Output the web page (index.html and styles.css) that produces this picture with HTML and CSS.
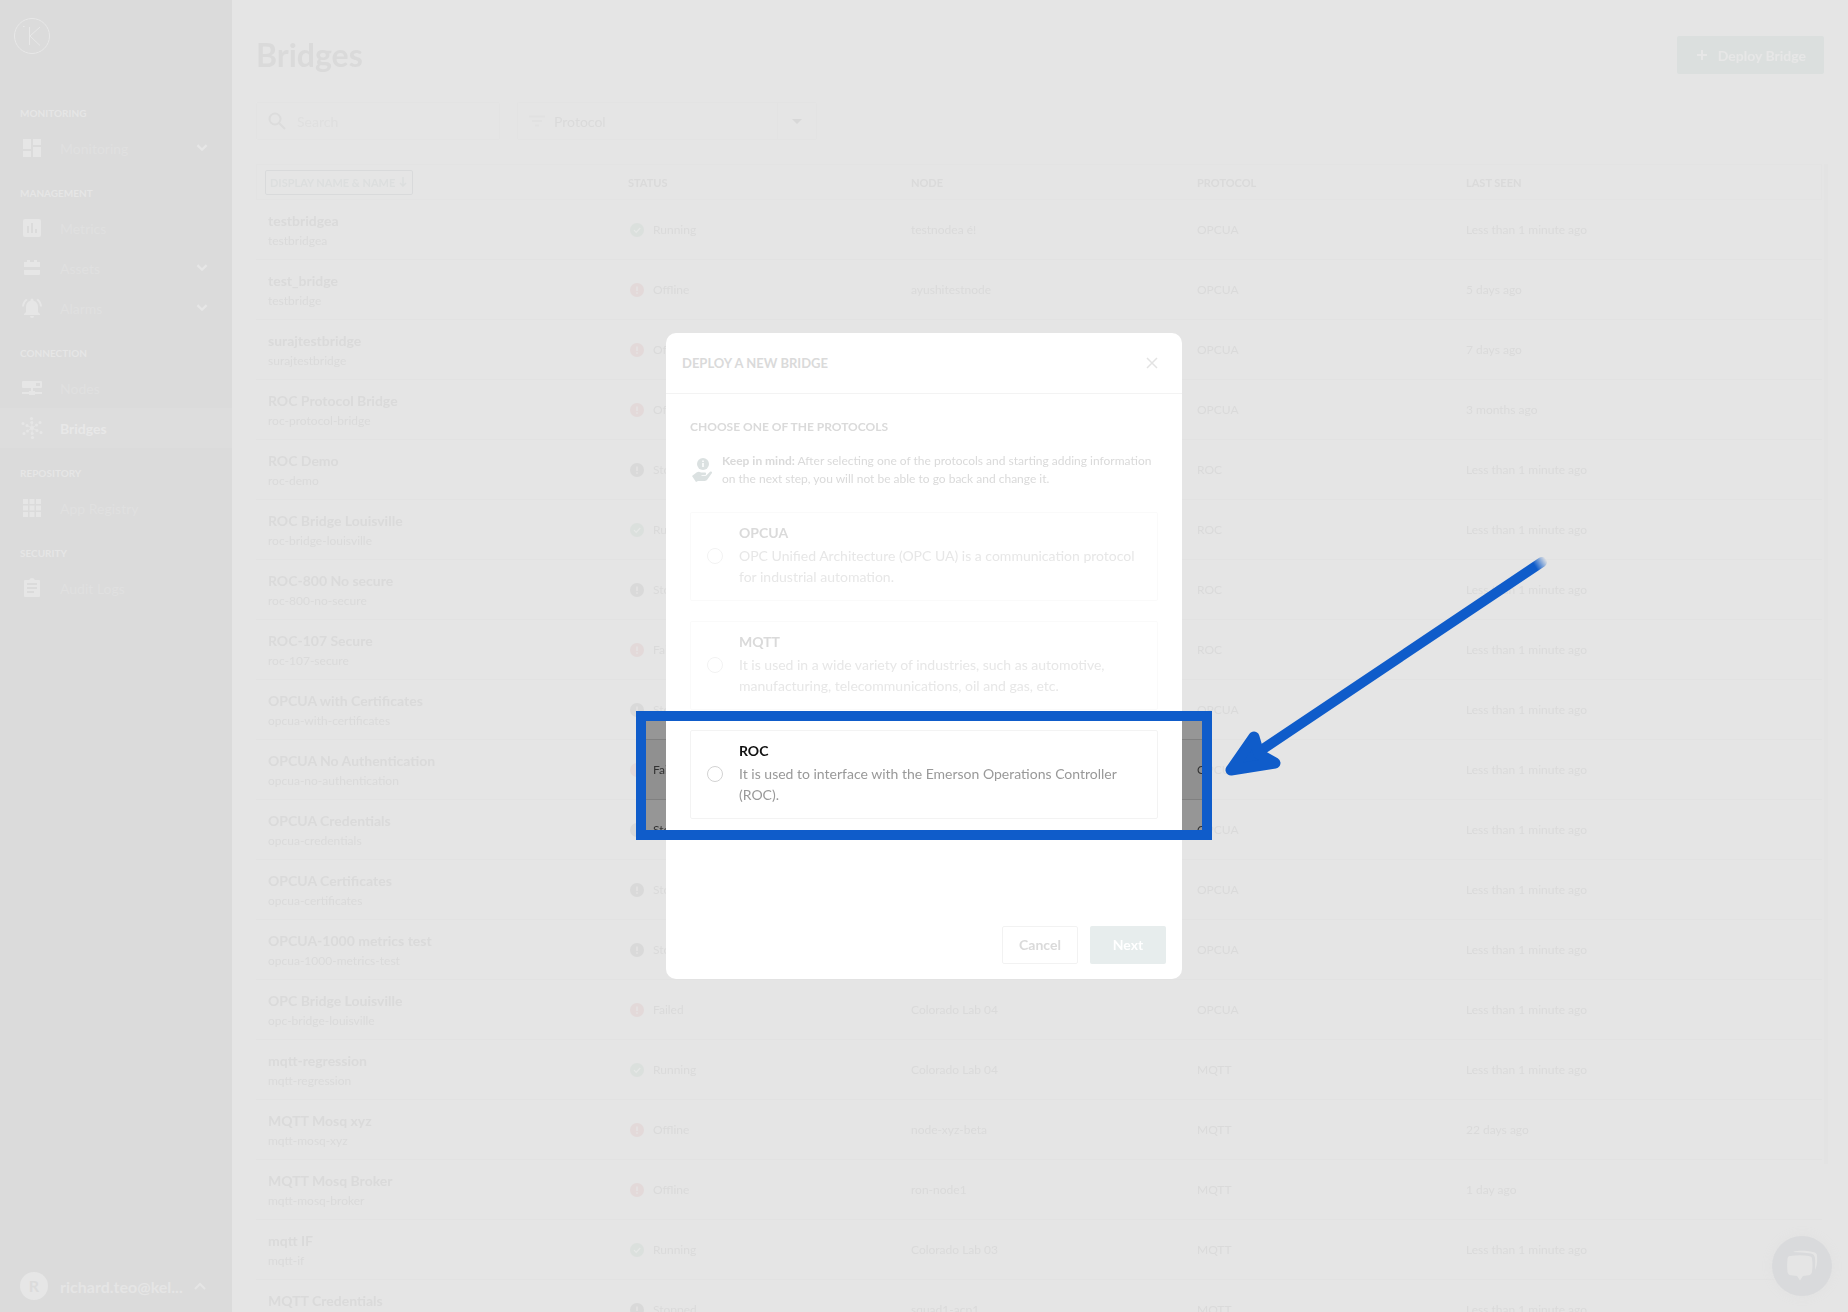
FILE: index.html
```html
<!DOCTYPE html>
<html lang="en">
<head>
    <meta charset="UTF-8">
    <meta name="viewport" content="width=device-width, initial-scale=1.0">
    <title>Bridges</title>
    <link rel="stylesheet" href="styles.css">
</head>
<body>
    <!-- shared icons -->
    <svg class="defs" width="0" height="0">
        <symbol id="ok" viewBox="0 0 14 14"><circle cx="7" cy="7" r="7" fill="currentColor"/><path d="M4 7.2l2.2 2.2L10.2 5" fill="none" stroke="#e6e8e7" stroke-width="1.2"/></symbol>
        <symbol id="warn" viewBox="0 0 14 14"><circle cx="7" cy="7" r="7" fill="currentColor"/><path d="M7 3.5v4.4M7 9.2v1.5" stroke="#e6e4e4" stroke-width="1.4"/></symbol>
        <symbol id="down" viewBox="0 0 10 7"><path d="M1 1l4 4 4-4" fill="none" stroke="currentColor" stroke-width="2"/></symbol>
    </svg>

    <div class="app">
        <aside class="sidebar">
            <div class="logo">
                <svg width="38" height="38" viewBox="0 0 38 38" fill="none" stroke="#e8e8e8"><circle cx="19" cy="19" r="17.5"/><path d="M16.500 10v18M27 10L17 19l10 9.500M10 9.500h1.500"/></svg>
            </div>
            <nav>
                <h3>MONITORING</h3>
                <a href="#"><svg viewBox="0 0 24 24"><path d="M3 13h8V3H3v10zm0 8h8v-6H3v6zm10 0h8V11h-8v10zm0-18v6h8V3h-8z"/></svg><span>Monitoring</span><svg class="chev"><use href="#down"/></svg></a>
                <h3>MANAGEMENT</h3>
                <a href="#"><svg viewBox="0 0 24 24"><path d="M19 3H5a2 2 0 0 0-2 2v14a2 2 0 0 0 2 2h14a2 2 0 0 0 2-2V5a2 2 0 0 0-2-2zM9 17H7v-7h2v7zm4 0h-2V7h2v10zm4 0h-2v-4h2v4z"/></svg><span>Metrics</span></a>
                <a href="#"><svg viewBox="0 0 24 24"><path d="M4 11V6h3V4h3v2h4V4h3v2h3v5zM4 14h16v4a1 1 0 0 1-1 1H5a1 1 0 0 1-1-1z"/></svg><span>Assets</span><svg class="chev"><use href="#down"/></svg></a>
                <a href="#"><svg viewBox="0 0 24 24"><path d="M7.600 4.100L6.200 2.700C3.800 4.500 2.200 7.300 2 10.500h2c.2-2.700 1.500-5 3.600-6.400zM20 10.500h2c-.2-3.200-1.700-6-4.100-7.800l-1.500 1.400c2.100 1.400 3.500 3.700 3.600 6.400zM18 11c0-3.100-1.600-5.600-4.500-6.300V4a1.500 1.500 0 0 0-3 0v.7C7.600 5.400 6 7.900 6 11v5l-2 2v1h16v-1l-2-2v-5zM10 20a2 2 0 0 0 4 0z"/></svg><span>Alarms</span><svg class="chev"><use href="#down"/></svg></a>
                <h3>CONNECTION</h3>
                <a href="#"><svg viewBox="0 0 24 24"><path fill-rule="evenodd" d="M3 5h18a1 1 0 0 1 1 1v5a1 1 0 0 1-1 1h-8v3h2v1h7v2h-7v1H9v-1H2v-2h7v-1h2v-3H3a1 1 0 0 1-1-1V6a1 1 0 0 1 1-1zm13 2v3h4V7z"/></svg><span>Nodes</span></a>
                <a href="#" class="active"><svg viewBox="0 0 24 24"><path d="M11.800 6.500l.4 11M7 9.500l10 5M7.500 15l9-6" stroke="currentColor" stroke-width="1"/><g><circle cx="12" cy="12" r="2"/><circle cx="11.500" cy="2.500" r="1.600"/><circle cx="12.500" cy="21.500" r="1.600"/><circle cx="3" cy="7.500" r="1.500"/><circle cx="21" cy="16.500" r="1.500"/><circle cx="4" cy="17.500" r="1.500"/><circle cx="20" cy="6.500" r="1.500"/><circle cx="11.800" cy="6.500" r="1.500"/><circle cx="12.200" cy="17.500" r="1.500"/><circle cx="7" cy="9.500" r="1.500"/><circle cx="17" cy="14.500" r="1.500"/><circle cx="7.500" cy="15" r="1.500"/><circle cx="16.500" cy="9" r="1.500"/></g></svg><span>Bridges</span></a>
                <h3>REPOSITORY</h3>
                <a href="#"><svg viewBox="0 0 24 24"><path d="M3 3h5v5H3zM9.500 3h5v5h-5zM16 3h5v5h-5zM3 9.500h5v5H3zM9.500 9.500h5v5h-5zM16 9.500h5v5h-5zM3 16h5v5H3zM9.500 16h5v5h-5zM16 16h5v5h-5z"/></svg><span>App Registry</span></a>
                <h3>SECURITY</h3>
                <a href="#"><svg viewBox="0 0 24 24"><path d="M19 4h-4.200a3 3 0 0 0-5.600 0H5a1 1 0 0 0-1 1v15a1 1 0 0 0 1 1h14a1 1 0 0 0 1-1V5a1 1 0 0 0-1-1zm-5 13H7v-2h7v2zm3-4H7v-2h10v2zm0-4H7V7h10v2z"/></svg><span>Audit Logs</span></a>
            </nav>
            <button class="user">
                <span class="avatar">R</span>
                <span class="mail">richard.teo@kel...</span>
                <svg width="12" height="8" viewBox="0 0 12 8"><path d="M1 7l5-5 5 5" fill="none" stroke="currentColor" stroke-width="2"/></svg>
            </button>
        </aside>

        <main>
            <header class="top">
                <h1>Bridges</h1>
                <button class="deploy"><svg width="10" height="12" viewBox="0 0 10 12"><path d="M5 1v10M0 6h10" stroke="currentColor" stroke-width="2"/></svg>Deploy Bridge</button>
            </header>

            <div class="filters">
                <label class="search">
                    <svg width="18" height="18" viewBox="0 0 18 18" fill="none" stroke="currentColor" stroke-width="2"><circle cx="7" cy="7" r="5.500"/><path d="M11 11l6 6"/></svg>
                    <input type="text" placeholder="Search" aria-label="Search">
                </label>
                <label class="protocol">
                    <svg width="16" height="12" viewBox="0 0 16 12"><path d="M0 1.500h16M3 6h10M6 10.500h4" stroke="#e1e1e1" stroke-width="2"/></svg>
                    <select aria-label="Protocol"><option>Protocol</option></select>
                    <span class="caret"></span>
                </label>
            </div>

            <div class="list">
            <table>
                <thead>
                    <tr>
                        <th class="c-name"><button class="sort">DISPLAY NAME &amp; NAME <svg width="8" height="10" viewBox="0 0 8 10"><path d="M4 0v9M1 6l3 3 3-3" fill="none" stroke="currentColor" stroke-width="1.500"/></svg></button></th>
                        <th class="c-status">STATUS</th>
                        <th class="c-node">NODE</th>
                        <th class="c-proto">PROTOCOL</th>
                        <th>LAST SEEN</th>
                    </tr>
                </thead>
                <tbody>
                    <tr><td><b>testbridgea</b><small>testbridgea</small></td><td><svg class="st green"><use href="#ok"/></svg>Running</td><td>testnodea é!</td><td>OPCUA</td><td>Less than 1 minute ago</td></tr>
                    <tr><td><b>test_bridge</b><small>testbridge</small></td><td><svg class="st red"><use href="#warn"/></svg>Offline</td><td>ayushitestnode</td><td>OPCUA</td><td>5 days ago</td></tr>
                    <tr><td><b>surajtestbridge</b><small>surajtestbridge</small></td><td><svg class="st red"><use href="#warn"/></svg>Offline</td><td></td><td>OPCUA</td><td>7 days ago</td></tr>
                    <tr><td><b>ROC Protocol Bridge</b><small>roc-protocol-bridge</small></td><td><svg class="st red"><use href="#warn"/></svg>Offline</td><td></td><td>OPCUA</td><td>3 months ago</td></tr>
                    <tr><td><b>ROC Demo</b><small>roc-demo</small></td><td><svg class="st"><use href="#warn"/></svg>Stopped</td><td></td><td>ROC</td><td>Less than 1 minute ago</td></tr>
                    <tr><td><b>ROC Bridge Louisville</b><small>roc-bridge-louisville</small></td><td><svg class="st green"><use href="#ok"/></svg>Running</td><td></td><td>ROC</td><td>Less than 1 minute ago</td></tr>
                    <tr><td><b>ROC-800 No secure</b><small>roc-800-no-secure</small></td><td><svg class="st"><use href="#warn"/></svg>Stopped</td><td></td><td>ROC</td><td>Less than 1 minute ago</td></tr>
                    <tr><td><b>ROC-107 Secure</b><small>roc-107-secure</small></td><td><svg class="st red"><use href="#warn"/></svg>Failed</td><td></td><td>ROC</td><td>Less than 1 minute ago</td></tr>
                    <tr><td><b>OPCUA with Certificates</b><small>opcua-with-certificates</small></td><td><svg class="st"><use href="#warn"/></svg>Stopped</td><td></td><td>OPCUA</td><td>Less than 1 minute ago</td></tr>
                    <tr><td><b>OPCUA No Authentication</b><small>opcua-no-authentication</small></td><td><svg class="st red"><use href="#warn"/></svg><span class="lit">Failed</span></td><td></td><td><span class="lit">O</span>PCUA</td><td>Less than 1 minute ago</td></tr>
                    <tr><td><b>OPCUA Credentials</b><small>opcua-credentials</small></td><td><svg class="st"><use href="#warn"/></svg><span class="lit">Stopped</span></td><td></td><td><span class="lit">O</span>PCUA</td><td>Less than 1 minute ago</td></tr>
                    <tr><td><b>OPCUA Certificates</b><small>opcua-certificates</small></td><td><svg class="st"><use href="#warn"/></svg>Stopped</td><td></td><td>OPCUA</td><td>Less than 1 minute ago</td></tr>
                    <tr><td><b>OPCUA-1000 metrics test</b><small>opcua-1000-metrics-test</small></td><td><svg class="st"><use href="#warn"/></svg>Stopped</td><td></td><td>OPCUA</td><td>Less than 1 minute ago</td></tr>
                    <tr><td><b>OPC Bridge Louisville</b><small>opc-bridge-louisville</small></td><td><svg class="st red"><use href="#warn"/></svg>Failed</td><td>Colorado Lab 04</td><td>OPCUA</td><td>Less than 1 minute ago</td></tr>
                    <tr><td><b>mqtt-regression</b><small>mqtt-regression</small></td><td><svg class="st green"><use href="#ok"/></svg>Running</td><td>Colorado Lab 04</td><td>MQTT</td><td>Less than 1 minute ago</td></tr>
                    <tr><td><b>MQTT Mosq xyz</b><small>mqtt-mosq-xyz</small></td><td><svg class="st red"><use href="#warn"/></svg>Offline</td><td>node-xyz-beta</td><td>MQTT</td><td>22 days ago</td></tr>
                    <tr><td><b>MQTT Mosq Broker</b><small>mqtt-mosq-broker</small></td><td><svg class="st red"><use href="#warn"/></svg>Offline</td><td>ron-node1</td><td>MQTT</td><td>1 day ago</td></tr>
                    <tr><td><b>mqtt IF</b><small>mqtt-if</small></td><td><svg class="st green"><use href="#ok"/></svg>Running</td><td>Colorado Lab 03</td><td>MQTT</td><td>Less than 1 minute ago</td></tr>
                    <tr><td><b>MQTT Credentials</b><small>mqtt-credentials</small></td><td><svg class="st"><use href="#warn"/></svg>Stopped</td><td>squad1-acp1</td><td>MQTT</td><td>Less than 1 minute ago</td></tr>
                </tbody>
            </table>
            <div class="scrollbar"></div>
            </div>
        </main>
    </div>

    <div class="layer under"><div class="stage"><div class="shade"></div></div></div>

    <div class="layer over">
        <div class="stage">
            <form class="modal">
                <header>
                    <h2>DEPLOY A NEW BRIDGE</h2>
                    <button type="button" class="close" aria-label="Close"><svg width="12" height="12" viewBox="0 0 12 12"><path d="M1 1l10 10M11 1L1 11" stroke="currentColor" stroke-width="1.500"/></svg></button>
                </header>
                <div class="body">
                    <h4>CHOOSE ONE OF THE PROTOCOLS</h4>
                    <div class="note">
                        <svg width="20" height="24" viewBox="0 0 20 24" fill="#dbe1e1"><circle cx="11" cy="6" r="6"/><path d="M0 18l4.500-3.500c1.500-1 3-1 4.500 0h4c1.500 0 1.500 2.500 0 2.500H9.500v.8H14l4-4c1.500-1 2.800.4 1.600 1.800L15 22c-1 .9-2 1-3 1H6l-2 1z"/><path d="M11 5v4M11 2.500v1.500" stroke="#fff" stroke-width="1.500"/></svg>
                        <p><b>Keep in mind:</b> After selecting one of the protocols and starting adding information on the next step, you will not be able to go back and change it.</p>
                    </div>
                    <label class="option">
                        <input type="radio" name="protocol">
                        <span><b>OPCUA</b>OPC Unified Architecture (OPC UA) is a communication protocol for industrial automation.</span>
                    </label>
                    <label class="option">
                        <input type="radio" name="protocol">
                        <span><b>MQTT</b>It is used in a wide variety of industries, such as automotive, manufacturing, telecommunications, oil and gas, etc.</span>
                    </label>
                    <label class="option picked">
                        <input type="radio" name="protocol">
                        <span><b>ROC</b>It is used to interface with the Emerson Operations Controller (ROC).</span>
                    </label>
                </div>
                <footer>
                    <button type="button" class="cancel">Cancel</button>
                    <button type="button" class="next">Next</button>
                </footer>
            </form>
            <div class="frame"></div>
            <svg class="arrow" width="336" height="232" viewBox="0 0 336 232">
                <defs>
                    <linearGradient id="fade" gradientUnits="userSpaceOnUse" x1="319" y1="16" x2="330" y2="9"><stop offset="0" stop-color="#0f5cca"/><stop offset="1" stop-color="#0f5cca" stop-opacity="0"/></linearGradient>
                </defs>
                <path d="M44 201L326 12" stroke="url(#fade)" stroke-width="10" stroke-linecap="round"/>
                <path d="M38 187L15 220l44-7-16-9z" fill="#0f5cca" stroke="#0f5cca" stroke-width="11" stroke-linejoin="round"/>
            </svg>
        </div>
    </div>

    <button class="chat" aria-label="Chat">
        <svg width="32" height="32" viewBox="0 0 32 32"><path d="M7 2c6-2 14-1 20 0 3 .5 4 2 4 4 .5 5 0 10-2 14 0-5 .500-9 0-12-.500-3-2-4-4-4.500C19 2.500 13 2.500 7 2z" fill="#e5e5e5"/><path d="M4 6c7-1 13-1 19 0 2 .500 3 1 3 3 .800 5 .500 9 0 13-.500 2-1.500 3-3.500 3.200l-5.500.800-3 4.500-3-4.500-6-.800c-2-.200-3-1.200-3.500-3.200-.500-4-.500-9 0-13 .200-2 1-2.700 2.500-3z" fill="#e5e5e5"/></svg>
    </button>
</body>
</html>
```
FILE: styles.css
```css
*{
    box-sizing: border-box;
}
body{
    margin: 0;
    font-family: Lato, "Open Sans", sans-serif;
    font-size: 14px;
    background: #e5e5e5;
    color: #dadada;
    overflow: hidden;
}
h1, h2, h3, h4, p{
    margin: 0;
}
button{
    font: inherit;
    color: inherit;
    border: none;
    background: none;
    padding: 0;
}
.defs{
    position: absolute;
}
.app{
    display: flex;
    height: 100vh;
    position: relative;
    z-index: 1;
}

/* sidebar */
.sidebar{
    width: 232px;
    flex: none;
    background: #dbdbdb;
    color: #e6e6e6;
    display: flex;
    flex-direction: column;
}
.logo{
    height: 88px;
    padding: 17px 13px;
}
nav{
    flex: 1;
}
nav h3{
    height: 40px;
    padding: 17px 20px 0;
    font-size: 10px;
    line-height: 16px;
}
nav a{
    display: flex;
    align-items: center;
    height: 40px;
    padding: 0 24px 0 20px;
    color: #e6e6e6;
    text-decoration: none;
}
nav a svg{
    width: 24px;
    height: 24px;
    fill: currentColor;
}
nav a span{
    flex: 1;
    margin-left: 16px;
    color: #e0e0e0;
}
nav a svg.chev{
    width: 12px;
    height: 8px;
}
nav a.active{
    background: #dddddd;
}
nav a.active span{
    color: #e8e8e8;
    font-weight: bold;
}
.user{
    display: flex;
    align-items: center;
    padding: 12px 26px 12px 20px;
    font-size: 16px;
    font-weight: bold;
    color: #e5e5e5;
}
.avatar{
    width: 28px;
    height: 28px;
    border-radius: 50%;
    background: #e6e6e6;
    color: #dbdbdb;
    line-height: 28px;
}
.mail{
    flex: 1;
    margin-left: 12px;
    text-align: left;
}

/* page */
main{
    flex: 1;
    padding: 36px 24px 0;
    overflow: hidden;
}
.top{
    display: flex;
    justify-content: space-between;
    align-items: center;
    height: 38px;
}
h1{
    font-size: 32px;
    line-height: 38px;
}
.deploy{
    display: flex;
    align-items: center;
    gap: 11px;
    height: 38px;
    padding: 0 18px 0 20px;
    border-radius: 2px;
    background: #dbdfde;
    color: #e7e7e7;
    font-weight: bold;
}
.filters{
    display: flex;
    gap: 17px;
    margin-top: 28px;
}
.search, .protocol{
    display: flex;
    align-items: center;
    height: 38px;
    border: 1px solid #e3e3e3;
    border-radius: 2px;
}
.search{
    width: 244px;
    padding-left: 11px;
    color: #dcdcdc;
}
.search input, .protocol select{
    flex: 1;
    min-width: 0;
    border: none;
    background: none;
    font: inherit;
    color: #dadada;
    padding: 0 0 0 11px;
    outline: none;
}
.search input::placeholder{
    color: #dfdfdf;
}
.protocol{
    width: 300px;
    padding-left: 11px;
}
.protocol select{
    appearance: none;
    padding-left: 9px;
}
.caret{
    width: 39px;
    height: 36px;
    border-left: 1px solid #e3e3e3;
    display: flex;
    align-items: center;
    justify-content: center;
}
.caret::after{
    content: "";
    border: 5px solid transparent;
    border-top-color: #d8d8d8;
    border-bottom: none;
}

/* bridge list */
.list{
    display: flex;
    gap: 2px;
    margin: 24px -4px 0 0;
    align-items: flex-start;
}
.scrollbar{
    width: 4px;
    height: calc(100vh - 312px);
    background: #e3e3e3;
}
table{
    flex: 1;
    border-collapse: separate;
    border-spacing: 0;
    table-layout: fixed;
}
th{
    height: 36px;
    padding: 0 12px;
    border-top: 1px solid #e3e3e3;
    border-bottom: 1px solid #e3e3e3;
    font-size: 11px;
    text-align: left;
}
th:first-child{
    padding: 0 8px;
    border-left: 1px solid #e3e3e3;
}
th:last-child{
    border-right: 1px solid #e3e3e3;
}
.c-name{
    width: 360px;
}
.c-status{
    width: 283px;
}
.c-node{
    width: 286px;
}
.c-proto{
    width: 269px;
}
.sort{
    height: 25px;
    padding: 0 5px 0 4px;
    border: 1px solid #d9dadb;
    border-radius: 2px;
    color: #dcdede;
    font-weight: bold;
    display: flex;
    align-items: center;
    gap: 4px;
}
td{
    height: 60px;
    padding: 0 12px;
    border-bottom: 1px solid rgba(0, 0, 0, .012);
    font-size: 12px;
    white-space: nowrap;
}
td:first-child{
    padding-top: 3px;
}
td b{
    display: block;
    font-size: 14px;
    line-height: 20px;
}
td small{
    display: block;
    font-size: 12px;
    line-height: 20px;
}
.st{
    width: 14px;
    height: 14px;
    margin: 0 9px 0 2px;
    vertical-align: -3px;
    color: #d9d9d9;
}
.st.red{
    color: #e3d9d9;
}
.st.green{
    color: #dbe0dd;
}
.lit{
    color: #333;
}

/* dialog layers, both centred on the window */
.layer{
    position: fixed;
    inset: 0;
    display: flex;
    align-items: center;
    justify-content: center;
}
.under{
    z-index: 0;
}
.over{
    z-index: 2;
}
.stage{
    position: relative;
    width: 516px;
    height: 646px;
}
.shade, .frame{
    position: absolute;
    left: -30px;
    right: -30px;
    top: 378px;
    height: 129px;
}
.shade{
    background: linear-gradient(#969696 28px, #828282 28px 29px, #909090 29px 88px, #828282 88px 89px, #969696 89px);
}
.frame{
    border: 10px solid #0f5cca;
}
.arrow{
    position: absolute;
    left: 550px;
    top: 217px;
}
.modal{
    height: 100%;
    display: flex;
    flex-direction: column;
    background: #fff;
    border-radius: 10px;
}
.modal header{
    display: flex;
    align-items: center;
    justify-content: space-between;
    height: 61px;
    padding: 0 24px 0 16px;
    border-bottom: 1px solid #f3f3f3;
}
h2{
    font-size: 13px;
}
.close{
    display: flex;
    color: #e3e3e3;
}
.body{
    flex: 1;
    padding: 24px 24px 0;
}
h4{
    font-size: 12px;
    line-height: 18px;
}
.note{
    display: flex;
    align-items: center;
    gap: 10px;
    margin: 16px 0 24px;
    padding-left: 2px;
    font-size: 12px;
    line-height: 18px;
}
.note svg{
    flex: none;
}
.option{
    display: flex;
    align-items: center;
    height: 89px;
    margin-bottom: 20px;
    padding: 0 16px 2px;
    border: 1px solid #fafafa;
    border-radius: 2px;
    line-height: 21px;
    color: #e7e7e7;
}
.option span{
    padding-bottom: 3px;
}
.option b{
    display: block;
    line-height: 24px;
    color: #dadada;
}
.option input{
    appearance: none;
    flex: none;
    width: 16px;
    height: 16px;
    margin: 0 16px 0 0;
    border: 1px solid #f2f2f2;
    border-radius: 50%;
}
.option.picked{
    border-color: #f3f3f3;
    color: #999;
}
.option.picked b{
    color: #111;
}
.option.picked input{
    border-color: #d2d2d2;
}
.modal footer{
    display: flex;
    justify-content: flex-end;
    gap: 12px;
    padding: 0 16px 15px;
}
.cancel, .next{
    width: 76px;
    height: 38px;
    padding-bottom: 2px;
    border-radius: 2px;
    font-weight: bold;
}
.cancel{
    border: 1px solid #f2f2f2;
}
.next{
    background: #e7eded;
    color: #fff;
}

.chat{
    position: fixed;
    right: 16px;
    bottom: 16px;
    z-index: 3;
    width: 60px;
    height: 60px;
    border-radius: 50%;
    background: #d9dadc;
    box-shadow: 0 0 12px #e1e1e1;
    display: flex;
    align-items: center;
    justify-content: center;
}
```
